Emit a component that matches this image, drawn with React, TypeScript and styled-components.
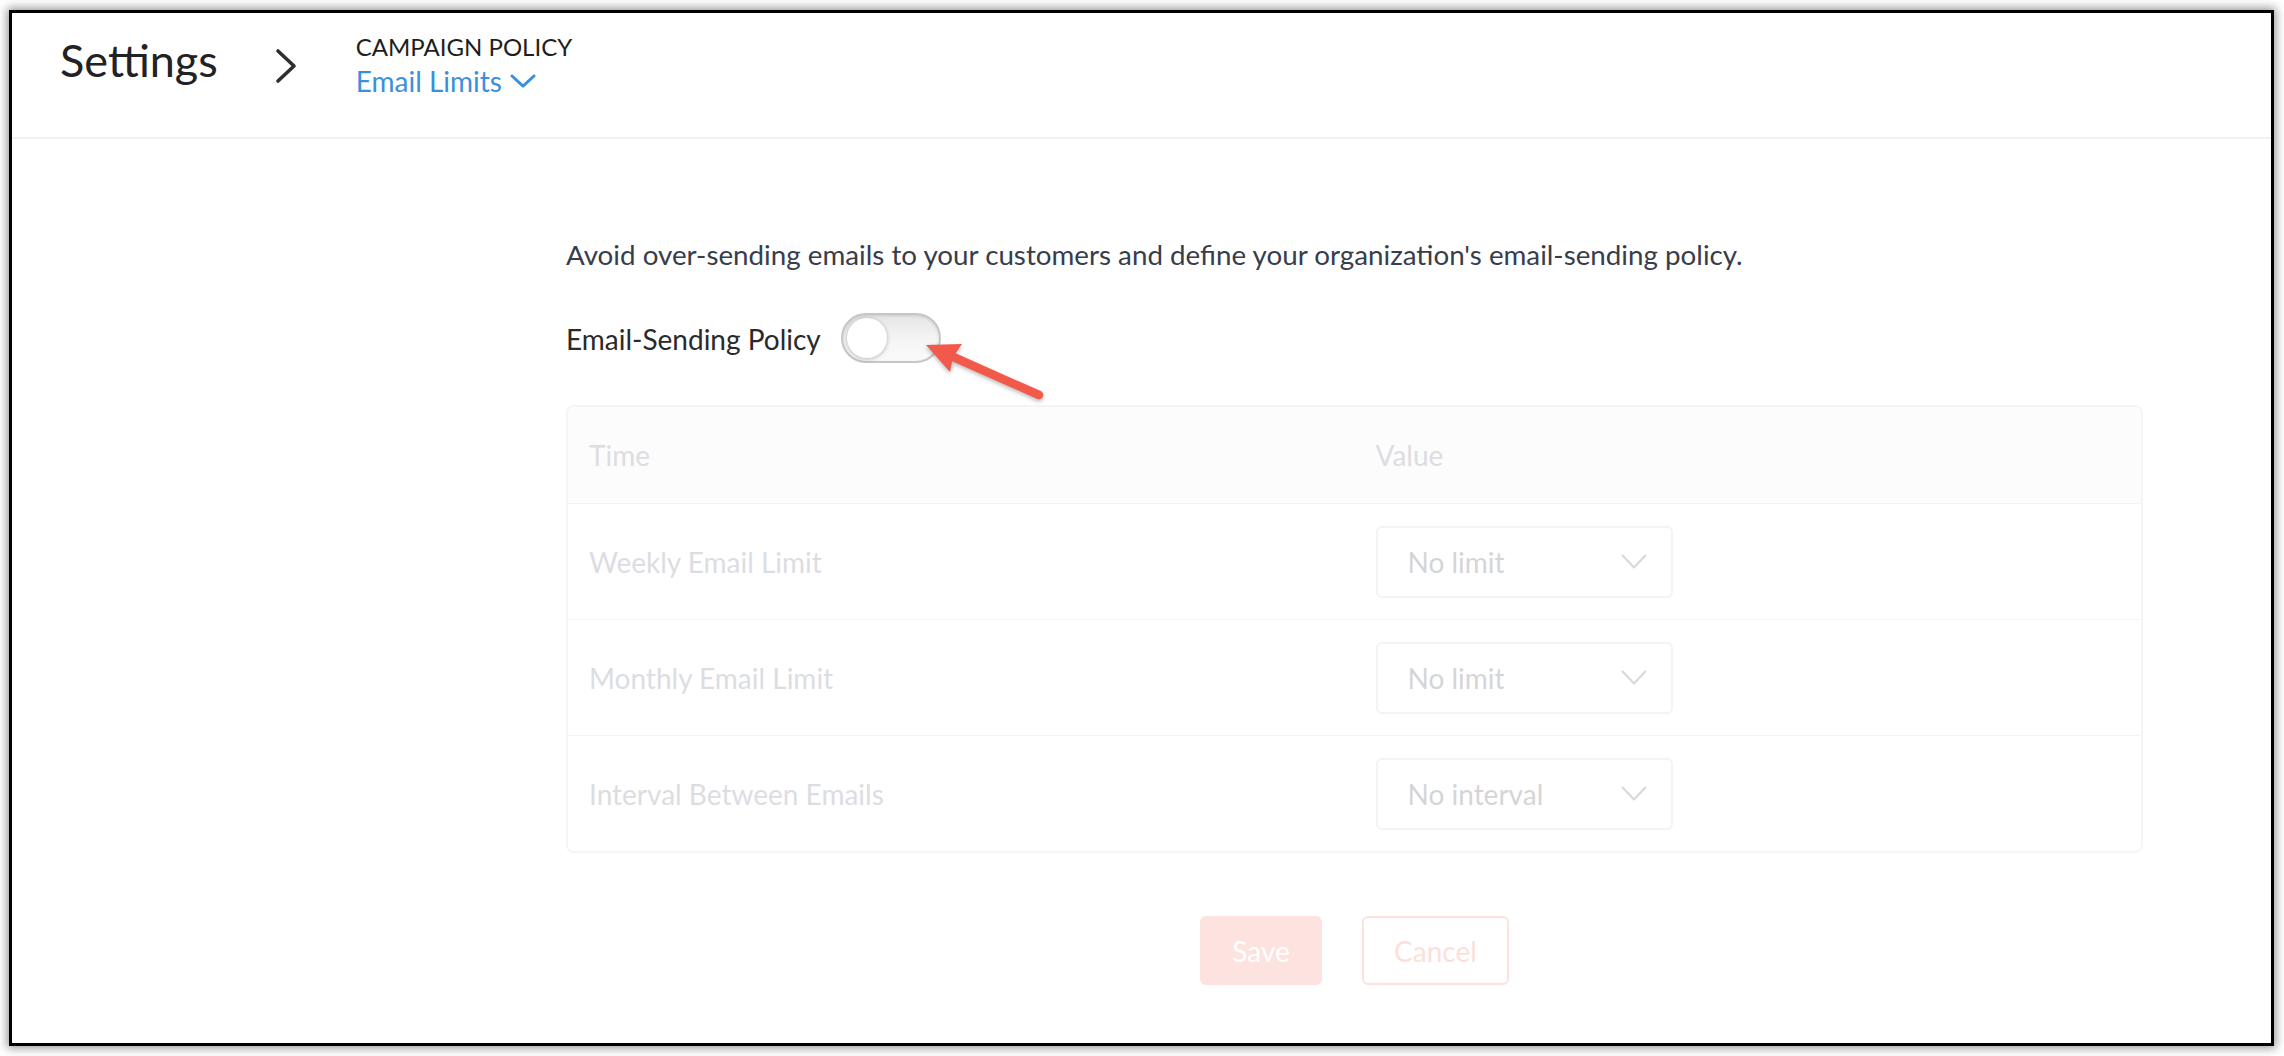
import React from "react";
import styled, { createGlobalStyle } from "styled-components";

const GlobalStyle = createGlobalStyle`
  html, body {
    margin: 0;
    padding: 0;
    background: #ffffff;
  }
  body {
    font-family: Lato, "Liberation Sans", Arial, sans-serif;
    -webkit-font-smoothing: antialiased;
  }
  * { box-sizing: border-box; }
`;

const Page = styled.div`
  width: 2284px;
  height: 1056px;
  padding: 10px 10px 10px 9px;
`;

const Window = styled.div`
  width: 100%;
  height: 100%;
  border: 3px solid #000;
  background: #fff;
  box-shadow: 0 0 9px 2px rgba(0, 0, 0, 0.42);
  display: flex;
  flex-direction: column;
  overflow: hidden;
`;

const Header = styled.header`
  height: 126px;
  flex-shrink: 0;
  border-bottom: 2px solid #f1f1f5;
  display: flex;
  align-items: flex-start;
  padding: 21px 0 0 48px;
`;

const Title = styled.h1`
  margin: 0 57px 0 0;
  font-size: 45px;
  line-height: 52px;
  font-weight: 400;
  color: #222;
`;

const CrumbArrow = styled.svg`
  margin-top: 14px;
  margin-right: 59px;
  flex-shrink: 0;
`;

const Crumbs = styled.div`
  display: flex;
  flex-direction: column;
  gap: 8px;
  padding-top: 1px;
`;

const CrumbLabel = styled.div`
  font-size: 24px;
  line-height: 24px;
  color: #1e1e1e;
`;

const CrumbLink = styled.div`
  display: flex;
  align-items: center;
  gap: 8px;
  font-size: 28px;
  line-height: 28px;
  color: #3a90dc;
`;

const Main = styled.main`
  flex: 1;
  padding: 99px 0 0 554px;
`;

const Content = styled.div`
  width: 1577px;
  display: flex;
  flex-direction: column;
`;

const Description = styled.p`
  margin: 0 0 41px 0;
  font-size: 27.75px;
  line-height: 34px;
  color: #373d4b;
`;

const PolicyRow = styled.div`
  display: flex;
  align-items: center;
  height: 50px;
  gap: 20px;
`;

const PolicyLabel = styled.span`
  font-size: 28px;
  line-height: 50px;
  padding-top: 1px;
  color: #2a2a2a;
`;

const ToggleWrap = styled.div`
  position: relative;
  width: 100px;
  height: 50px;
`;

const Toggle = styled.div`
  width: 100px;
  height: 50px;
  border-radius: 25px;
  border: 2px solid #c6c6c6;
  background: linear-gradient(180deg, #e6e6e6 0%, #f6f6f6 60%, #fafafa 100%);
  box-shadow: inset 0 1px 3px rgba(0, 0, 0, 0.12);
  padding: 4px;
  display: flex;
  align-items: center;
`;

const Knob = styled.div`
  width: 40px;
  height: 40px;
  border-radius: 50%;
  background: #fff;
  box-shadow: 0 1px 4px rgba(0, 0, 0, 0.28);
`;

const Annotation = styled.svg`
  position: absolute;
  left: 73px;
  top: 17px;
  overflow: visible;
  filter: drop-shadow(0 2px 2px rgba(0, 0, 0, 0.28));
  pointer-events: none;
`;

const Table = styled.div`
  margin-top: 42px;
  border: 2px solid #f5f5f6;
  border-radius: 8px;
  overflow: hidden;
`;

const Row = styled.div<{ $head?: boolean }>`
  display: grid;
  grid-template-columns: 1fr 1fr;
  align-items: center;
  height: ${(p) => (p.$head ? "96px" : "116px")};
  background: ${(p) => (p.$head ? "#fcfcfd" : "#ffffff")};
  border-top: ${(p) => (p.$head ? "none" : "1px solid #f4f4f6")};
`;

const Cell = styled.div`
  padding-left: 21px;
  font-size: 28px;
  color: #dcdde2;
`;

const Select = styled.div`
  width: 297px;
  height: 72px;
  border: 2px solid #f3f3f4;
  border-radius: 6px;
  background: #fff;
  display: flex;
  align-items: center;
  justify-content: space-between;
  padding: 0 24px 0 30px;
  font-size: 28px;
  color: #d5d5d7;
`;

const Actions = styled.div`
  margin-top: 63px;
  display: flex;
  justify-content: center;
  gap: 40px;
`;

const Button = styled.button<{ $primary?: boolean }>`
  height: 69px;
  width: ${(p) => (p.$primary ? "122px" : "147px")};
  border-radius: 6px;
  font-family: Lato, "Liberation Sans", Arial, sans-serif;
  font-size: 28px;
  border: 2px solid #fde2de;
  background: ${(p) => (p.$primary ? "#fde3df" : "#ffffff")};
  color: ${(p) => (p.$primary ? "#ffffff" : "#fcdfda")};
  padding: 0;
`;

const Chevron = ({ color, w, h, sw }: { color: string; w: number; h: number; sw: number }) => (
  <svg width={w} height={h} viewBox={`0 0 ${w} ${h}`} fill="none">
    <path
      d={`M${sw / 2 + 0.5} ${sw / 2 + 0.5} L${w / 2} ${h - sw / 2 - 0.5} L${w - sw / 2 - 0.5} ${sw / 2 + 0.5}`}
      stroke={color}
      strokeWidth={sw}
      strokeLinecap="round"
      strokeLinejoin="round"
    />
  </svg>
);

const rows = [
  { label: "Weekly Email Limit", value: "No limit" },
  { label: "Monthly Email Limit", value: "No limit" },
  { label: "Interval Between Emails", value: "No interval" },
];

export default function App() {
  return (
    <>
      <GlobalStyle />
      <Page>
        <Window>
          <Header>
            <Title>Settings</Title>
            <CrumbArrow width="22" height="36" viewBox="0 0 22 36" fill="none">
              <path d="M3 3 L19 18 L3 33" stroke="#2e2e2e" strokeWidth="3.6" strokeLinecap="round" strokeLinejoin="round" />
            </CrumbArrow>
            <Crumbs>
              <CrumbLabel>CAMPAIGN POLICY</CrumbLabel>
              <CrumbLink>
                Email Limits
                <Chevron color="#3a90dc" w={26} h={14} sw={2.8} />
              </CrumbLink>
            </Crumbs>
          </Header>
          <Main>
            <Content>
              <Description>
                Avoid over-sending emails to your customers and define your organization's email-sending policy.
              </Description>
              <PolicyRow>
                <PolicyLabel>Email-Sending Policy</PolicyLabel>
                <ToggleWrap>
                  <Toggle>
                    <Knob />
                  </Toggle>
                  <Annotation width="135" height="75" viewBox="0 0 135 75">
                    <line x1="125" y1="65" x2="36" y2="25.5" stroke="#f3594a" strokeWidth="8.5" strokeLinecap="round" />
                    <polygon points="12,15 48,14 39,27 36,42" fill="#f3594a" />
                  </Annotation>
                </ToggleWrap>
              </PolicyRow>
              <Table>
                <Row $head>
                  <Cell>Time</Cell>
                  <Cell>Value</Cell>
                </Row>
                {rows.map((r) => (
                  <Row key={r.label}>
                    <Cell>{r.label}</Cell>
                    <Cell>
                      <Select>
                        {r.value}
                        <Chevron color="#d9d9db" w={26} h={15} sw={2.2} />
                      </Select>
                    </Cell>
                  </Row>
                ))}
              </Table>
              <Actions>
                <Button $primary>Save</Button>
                <Button>Cancel</Button>
              </Actions>
            </Content>
          </Main>
        </Window>
      </Page>
    </>
  );
}
